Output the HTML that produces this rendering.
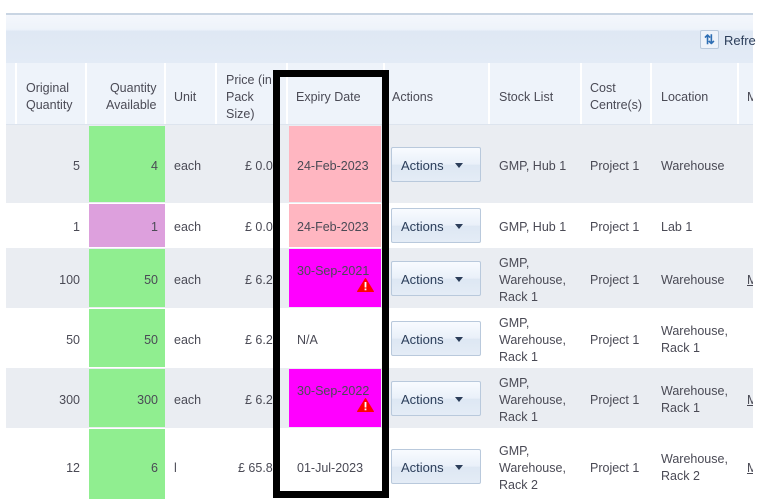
<!DOCTYPE html><html><head><style>
*{margin:0;padding:0;box-sizing:border-box}
body{width:784px;height:502px;background:#fff;position:relative;overflow:hidden;font-family:"Liberation Sans",sans-serif;font-size:12.5px;color:#4a4a55}
.a{position:absolute}
.t{position:absolute;white-space:nowrap;line-height:17px;margin-top:1px}
.btn{position:absolute;left:391px;width:90px;height:35px;border:1px solid #b9c9dc;border-radius:2px;background:linear-gradient(#f8fbff,#e9f0f9 50%,#dde7f3 51%,#e4ecf6);color:#2c3e5a;font-size:13px;line-height:35px;padding-left:9px}
.btn:after{content:"";position:absolute;left:63px;top:15px;border-left:4px solid transparent;border-right:4px solid transparent;border-top:5px solid #2c3e5a}
.hd{position:absolute;top:63px;height:62px;background:#eef3fa;border-right:2px solid #fff}
.warn{position:absolute;width:17px;height:14px}
</style></head><body>
<div class="a" style="left:6px;top:13px;width:747px;height:2px;background:#c9d5e3"></div>
<div class="a" style="left:6px;top:15px;width:747px;height:48px;background:linear-gradient(#f4f7fc,#eef3fa 30%,#dfe8f4 34%,#e3ebf6)"></div>
<div class="a" style="left:700px;top:30px;width:19px;height:19px;border:1px solid #b9c9dc;border-radius:2px;background:#eef3fa;color:#2f6fb4;font-size:13px;line-height:17px;text-align:center;font-weight:bold">⇅</div>
<div class="t" style="left:724px;top:31px;color:#2c3e5a;font-size:13px">Refre</div>
<div class="hd" style="left:6px;width:11px"></div>
<div class="hd" style="left:17px;width:70px"></div>
<div class="hd" style="left:87px;width:79px"></div>
<div class="hd" style="left:166px;width:51px"></div>
<div class="hd" style="left:217px;width:71px"></div>
<div class="hd" style="left:288px;width:97px"></div>
<div class="hd" style="left:385px;width:105px"></div>
<div class="hd" style="left:490px;width:92px"></div>
<div class="hd" style="left:582px;width:70px"></div>
<div class="hd" style="left:652px;width:87px"></div>
<div class="hd" style="left:739px;width:14px;border:none"></div>
<div class="a" style="left:6px;top:124px;width:747px;height:1px;background:#dde4ee"></div>
<div class="t" style="left:26px;top:79px">Original<br>Quantity</div>
<div class="t" style="left:106px;top:79px;text-align:right">&nbsp;Quantity<br>Available</div>
<div class="t" style="left:174px;top:88px">Unit</div>
<div class="t" style="left:226px;top:71px;width:50px;overflow:hidden">Price (in<br>Pack<br>Size)</div>
<div class="t" style="left:296px;top:88px">Expiry Date</div>
<div class="t" style="left:392px;top:88px">Actions</div>
<div class="t" style="left:499px;top:88px">Stock List</div>
<div class="t" style="left:590px;top:79px">Cost<br>Centre(s)</div>
<div class="t" style="left:661px;top:88px">Location</div>
<div class="t" style="left:747px;top:88px;width:6px;overflow:hidden">M</div>
<div class="a" style="left:6px;top:125px;width:747px;height:78px;background:#eaedf2"></div>
<div class="a" style="left:6px;top:248px;width:747px;height:60px;background:#eaedf2"></div>
<div class="a" style="left:6px;top:368px;width:747px;height:60px;background:#eaedf2"></div>
<div class="a" style="left:89px;top:126px;width:76px;height:76px;background:#90ee90"></div>
<div class="a" style="left:89px;top:204px;width:76px;height:43px;background:#dda0dd"></div>
<div class="a" style="left:89px;top:249px;width:76px;height:58px;background:#90ee90"></div>
<div class="a" style="left:89px;top:309px;width:76px;height:58px;background:#90ee90"></div>
<div class="a" style="left:89px;top:369px;width:76px;height:58px;background:#90ee90"></div>
<div class="a" style="left:89px;top:429px;width:76px;height:70px;background:#90ee90"></div>
<div class="a" style="left:289px;top:126px;width:92px;height:76px;background:#ffb6c1"></div>
<div class="a" style="left:289px;top:204px;width:92px;height:43px;background:#ffb6c1"></div>
<div class="a" style="left:289px;top:249px;width:92px;height:58px;background:#ff00ff"></div>
<div class="a" style="left:289px;top:369px;width:92px;height:58px;background:#ff00ff"></div>
<div class="t" style="left:60px;top:157px;width:20px;text-align:right">5</div>
<div class="t" style="left:60px;top:218px;width:20px;text-align:right">1</div>
<div class="t" style="left:50px;top:271px;width:30px;text-align:right">100</div>
<div class="t" style="left:50px;top:331px;width:30px;text-align:right">50</div>
<div class="t" style="left:50px;top:391px;width:30px;text-align:right">300</div>
<div class="t" style="left:50px;top:459px;width:30px;text-align:right">12</div>
<div class="t" style="left:120px;top:157px;width:38px;text-align:right">4</div>
<div class="t" style="left:120px;top:218px;width:38px;text-align:right">1</div>
<div class="t" style="left:120px;top:271px;width:38px;text-align:right">50</div>
<div class="t" style="left:120px;top:331px;width:38px;text-align:right">50</div>
<div class="t" style="left:120px;top:391px;width:38px;text-align:right">300</div>
<div class="t" style="left:120px;top:459px;width:38px;text-align:right">6</div>
<div class="t" style="left:174px;top:157px">each</div>
<div class="t" style="left:174px;top:218px">each</div>
<div class="t" style="left:174px;top:271px">each</div>
<div class="t" style="left:174px;top:331px">each</div>
<div class="t" style="left:174px;top:391px">each</div>
<div class="t" style="left:174px;top:459px">l</div>
<div class="t" style="left:245px;top:157px;width:28px;overflow:hidden">£ 0.00</div>
<div class="t" style="left:245px;top:218px;width:28px;overflow:hidden">£ 0.00</div>
<div class="t" style="left:245px;top:271px;width:28px;overflow:hidden">£ 6.20</div>
<div class="t" style="left:245px;top:331px;width:28px;overflow:hidden">£ 6.20</div>
<div class="t" style="left:245px;top:391px;width:28px;overflow:hidden">£ 6.20</div>
<div class="t" style="left:238px;top:459px;width:35px;overflow:hidden">£ 65.80</div>
<div class="t" style="left:297px;top:157px">24-Feb-2023</div>
<div class="t" style="left:297px;top:218px">24-Feb-2023</div>
<div class="t" style="left:297px;top:262px">30-Sep-2021</div>
<div class="t" style="left:297px;top:331px">N/A</div>
<div class="t" style="left:297px;top:382px">30-Sep-2022</div>
<div class="t" style="left:297px;top:459px">01-Jul-2023</div>
<svg class="warn" style="left:357px;top:278px" viewBox="0 0 17 14"><path d="M8.5 0.5L16.5 13.5H0.5Z" fill="#f00" stroke="#f00" stroke-linejoin="round"/><rect x="7.6" y="4" width="1.8" height="5.5" fill="#fff"/><rect x="7.6" y="10.5" width="1.8" height="1.8" fill="#fff"/></svg>
<svg class="warn" style="left:357px;top:398px" viewBox="0 0 17 14"><path d="M8.5 0.5L16.5 13.5H0.5Z" fill="#f00" stroke="#f00" stroke-linejoin="round"/><rect x="7.6" y="4" width="1.8" height="5.5" fill="#fff"/><rect x="7.6" y="10.5" width="1.8" height="1.8" fill="#fff"/></svg>
<div class="btn" style="top:147px">Actions</div>
<div class="btn" style="top:208px">Actions</div>
<div class="btn" style="top:261px">Actions</div>
<div class="btn" style="top:321px">Actions</div>
<div class="btn" style="top:381px">Actions</div>
<div class="btn" style="top:449px">Actions</div>
<div class="t" style="left:499px;top:157px">GMP, Hub 1</div>
<div class="t" style="left:499px;top:218px">GMP, Hub 1</div>
<div class="t" style="left:499px;top:254px">GMP,<br>Warehouse,<br>Rack 1</div>
<div class="t" style="left:499px;top:314px">GMP,<br>Warehouse,<br>Rack 1</div>
<div class="t" style="left:499px;top:374px">GMP,<br>Warehouse,<br>Rack 1</div>
<div class="t" style="left:499px;top:442px">GMP,<br>Warehouse,<br>Rack 2</div>
<div class="t" style="left:590px;top:157px">Project 1</div>
<div class="t" style="left:590px;top:218px">Project 1</div>
<div class="t" style="left:590px;top:271px">Project 1</div>
<div class="t" style="left:590px;top:331px">Project 1</div>
<div class="t" style="left:590px;top:391px">Project 1</div>
<div class="t" style="left:590px;top:459px">Project 1</div>
<div class="t" style="left:661px;top:157px">Warehouse</div>
<div class="t" style="left:661px;top:218px">Lab 1</div>
<div class="t" style="left:661px;top:271px">Warehouse</div>
<div class="t" style="left:661px;top:322px">Warehouse,<br>Rack 1</div>
<div class="t" style="left:661px;top:382px">Warehouse,<br>Rack 1</div>
<div class="t" style="left:661px;top:450px">Warehouse,<br>Rack 2</div>
<div class="t" style="left:747px;top:271px;width:6px;overflow:hidden;text-decoration:underline">M</div>
<div class="t" style="left:747px;top:391px;width:6px;overflow:hidden;text-decoration:underline">M</div>
<div class="t" style="left:747px;top:459px;width:6px;overflow:hidden;text-decoration:underline">M</div>
<div class="a" style="left:273px;top:70px;width:116px;height:428px;border:7px solid #000"></div>
</body></html>
